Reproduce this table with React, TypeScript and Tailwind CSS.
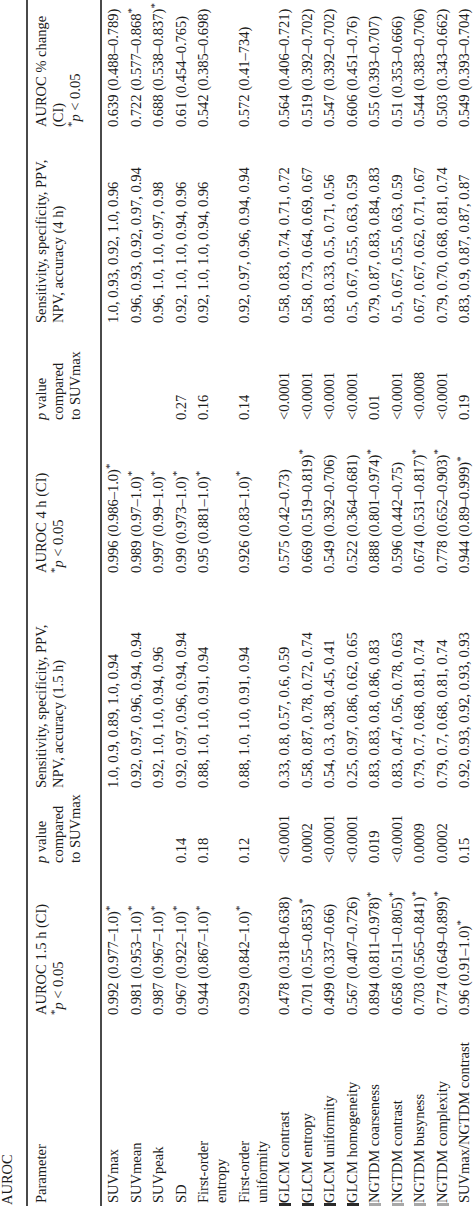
type Row = {
  label: string[];
  a15: string;
  p15: string;
  sens15: string;
  a4: string;
  p4: string;
  sens4: string;
  change: string;
  mark?: "dark" | "light";
};

const rows: Row[] = [
  { label: ["SUVmax"], a15: "0.992 (0.977–1.0)*", p15: "", sens15: "1.0, 0.9, 0.89, 1.0, 0.94", a4: "0.996 (0.986–1.0)*", p4: "", sens4: "1.0, 0.93, 0.92, 1.0, 0.96", change: "0.639 (0.488–0.789)" },
  { label: ["SUVmean"], a15: "0.981 (0.953–1.0)*", p15: "", sens15: "0.92, 0.97, 0.96, 0.94, 0.94", a4: "0.989 (0.97–1.0)*", p4: "", sens4: "0.96, 0.93, 0.92, 0.97, 0.94", change: "0.722 (0.577–0.868*" },
  { label: ["SUVpeak"], a15: "0.987 (0.967–1.0)*", p15: "", sens15: "0.92, 1.0, 1.0, 0.94, 0.96", a4: "0.997 (0.99–1.0)*", p4: "", sens4: "0.96, 1.0, 1.0, 0.97, 0.98", change: "0.688 (0.538–0.837)*" },
  { label: ["SD"], a15: "0.967 (0.922–1.0)*", p15: "0.14", sens15: "0.92, 0.97, 0.96, 0.94, 0.94", a4: "0.99 (0.973–1.0)*", p4: "0.27", sens4: "0.92, 1.0, 1.0, 0.94, 0.96", change: "0.61 (0.454–0.765)" },
  { label: ["First-order", "entropy"], a15: "0.944 (0.867–1.0)*", p15: "0.18", sens15: "0.88, 1.0, 1.0, 0.91, 0.94", a4: "0.95 (0.881–1.0)*", p4: "0.16", sens4: "0.92, 1.0, 1.0, 0.94, 0.96", change: "0.542 (0.385–0.698)" },
  { label: ["First-order", "uniformity"], a15: "0.929 (0.842–1.0)*", p15: "0.12", sens15: "0.88, 1.0, 1.0, 0.91, 0.94", a4: "0.926 (0.83–1.0)*", p4: "0.14", sens4: "0.92, 0.97, 0.96, 0.94, 0.94", change: "0.572 (0.41–734)" },
  { label: ["GLCM contrast"], a15: "0.478 (0.318–0.638)", p15: "<0.0001", sens15: "0.33, 0.8, 0.57, 0.6, 0.59", a4: "0.575 (0.42–0.73)", p4: "<0.0001", sens4: "0.58, 0.83, 0.74, 0.71, 0.72", change: "0.564 (0.406–0.721)", mark: "dark" },
  { label: ["GLCM entropy"], a15: "0.701 (0.55–0.853)*", p15: "0.0002", sens15: "0.58, 0.87, 0.78, 0.72, 0.74", a4: "0.669 (0.519–0.819)*", p4: "<0.0001", sens4: "0.58, 0.73, 0.64, 0.69, 0.67", change: "0.519 (0.392–0.702)", mark: "dark" },
  { label: ["GLCM uniformity"], a15: "0.499 (0.337–0.66)", p15: "<0.0001", sens15: "0.54, 0.3, 0.38, 0.45, 0.41", a4: "0.549 (0.392–0.706)", p4: "<0.0001", sens4: "0.83, 0.33, 0.5, 0.71, 0.56", change: "0.547 (0.392–0.702)", mark: "dark" },
  { label: ["GLCM homogeneity"], a15: "0.567 (0.407–0.726)", p15: "<0.0001", sens15: "0.25, 0.97, 0.86, 0.62, 0.65", a4: "0.522 (0.364–0.681)", p4: "<0.0001", sens4: "0.5, 0.67, 0.55, 0.63, 0.59", change: "0.606 (0.451–0.76)", mark: "dark" },
  { label: ["NGTDM coarseness"], a15: "0.894 (0.811–0.978)*", p15: "0.019", sens15: "0.83, 0.83, 0.8, 0.86, 0.83", a4: "0.888 (0.801–0.974)*", p4: "0.01", sens4: "0.79, 0.87, 0.83, 0.84, 0.83", change: "0.55 (0.393–0.707)", mark: "light" },
  { label: ["NGTDM contrast"], a15: "0.658 (0.511–0.805)*", p15: "<0.0001", sens15: "0.83, 0.47, 0.56, 0.78, 0.63", a4: "0.596 (0.442–0.75)", p4: "<0.0001", sens4: "0.5, 0.67, 0.55, 0.63, 0.59", change: "0.51 (0.353–0.666)", mark: "light" },
  { label: ["NGTDM busyness"], a15: "0.703 (0.565–0.841)*", p15: "0.0009", sens15: "0.79, 0.7, 0.68, 0.81, 0.74", a4: "0.674 (0.531–0.817)*", p4: "<0.0008", sens4: "0.67, 0.67, 0.62, 0.71, 0.67", change: "0.544 (0.383–0.706)", mark: "light" },
  { label: ["NGTDM complexity"], a15: "0.774 (0.649–0.899)*", p15: "0.0002", sens15: "0.79, 0.7, 0.68, 0.81, 0.74", a4: "0.778 (0.652–0.903)*", p4: "<0.0001", sens4: "0.79, 0.70, 0.68, 0.81, 0.74", change: "0.503 (0.343–0.662)", mark: "light" },
  { label: ["SUVmax/NGTDM contrast"], a15: "0.96 (0.91–1.0)*", p15: "0.15", sens15: "0.92, 0.93, 0.92, 0.93, 0.93", a4: "0.944 (0.89–0.999)*", p4: "0.19", sens4: "0.83, 0.9, 0.87, 0.87, 0.87", change: "0.549 (0.393–0.704)" },
];

function Val({ v }: { v: string }) {
  if (!v.endsWith("*")) return <>{v}</>;
  return (
    <>
      {v.slice(0, -1)}
      <sup>*</sup>
    </>
  );
}

function Sig() {
  return (
    <>
      <sup>*</sup>
      <i>p</i> &lt; 0.05
    </>
  );
}

function PValue() {
  return (
    <div>
      <i>p</i> value
      <br />
      compared
      <br />
      to SUVmax
    </div>
  );
}

const grid = "grid grid-cols-[188px_152px_75px_215px_153px_97px_196px_127px] pl-[3px]";

export default function App() {
  return (
    <div className="relative w-[474px] h-[1206px] overflow-hidden bg-white">
      {/* table laid out upright, then turned a quarter to the left like the scan */}
      <div
        className="absolute left-0 top-0 w-[1206px] h-[474px] origin-top-left -rotate-90 translate-y-[1206px] text-[#1c1c1c] text-[14.5px]"
        style={{ fontFamily: '"Liberation Serif", "Times New Roman", serif' }}
      >
        <div className="h-[26px] pl-[1px] leading-[14px]">AUROC</div>
        <div className="h-[2px] bg-[#4a4a4a]" />

        <div className={`${grid} h-[72px] pt-[5px] leading-[17px]`}>
          <div>Parameter</div>
          <div>
            AUROC 1.5 h (CI)
            <br />
            <Sig />
          </div>
          <PValue />
          <div>
            Sensitivity, specificity, PPV,
            <br />
            NPV, accuracy (1.5 h)
          </div>
          <div>
            AUROC 4 h (CI)
            <br />
            <Sig />
          </div>
          <PValue />
          <div>
            Sensitivity, specificity, PPV,
            <br />
            NPV, accuracy (4 h)
          </div>
          <div>
            AUROC % change
            <br />
            (CI)
            <br />
            <Sig />
          </div>
        </div>
        <div className="h-[2px] bg-[#4a4a4a]" />

        {rows.map((r) => (
          <div key={r.label.join(" ")} className={`${grid} relative py-[2.25px] leading-[18px]`}>
            {r.mark && (
              <span
                className={`absolute left-0 top-[6px] w-[3px] h-[12px] ${r.mark === "dark" ? "bg-[#2a2a2a]" : "bg-[#a8a8a8]"}`}
              />
            )}
            <div>
              {r.label.map((l) => (
                <div key={l}>{l}</div>
              ))}
            </div>
            <div>
              <Val v={r.a15} />
            </div>
            <div>{r.p15}</div>
            <div>{r.sens15}</div>
            <div>
              <Val v={r.a4} />
            </div>
            <div>{r.p4}</div>
            <div>{r.sens4}</div>
            <div>
              <Val v={r.change} />
            </div>
          </div>
        ))}
      </div>
    </div>
  );
}
